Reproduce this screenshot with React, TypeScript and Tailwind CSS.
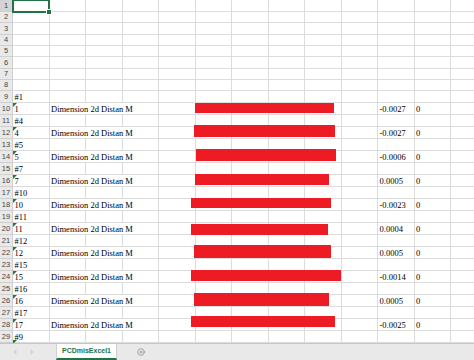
import { CirclePlus } from 'lucide-react';

const COLS = 13;

// column A text, keyed by row number
const colA: Record<number, string> = {
  9: '#1', 10: '1', 11: '#4', 12: '4', 13: '#5', 14: '5', 15: '#7', 16: '7',
  17: '#10', 18: '10', 19: '#11', 20: '11', 21: '#12', 22: '12', 23: '#15', 24: '15',
  25: '#16', 26: '16', 27: '#17', 28: '17', 29: '#9',
};

const deviation: Record<number, string> = {
  10: '-0.0027', 12: '-0.0027', 14: '-0.0006', 16: '0.0005', 18: '-0.0023',
  20: '0.0004', 22: '0.0005', 24: '-0.0014', 26: '0.0005', 28: '-0.0025',
};

// chart bars drawn over the grid: left, right, top, bottom
const bars = [
  [195, 334, 103, 113],
  [194, 335, 125, 137],
  [196, 336, 149, 161],
  [195, 329, 174, 185],
  [191, 331, 198, 208],
  [191, 328, 224, 235],
  [194, 331, 245, 258],
  [191, 341, 270, 281],
  [194, 329, 293, 306],
  [191, 335, 316, 327],
];

const rowHeight = (r: number) => (r === 1 ? 'h-[12px]' : r <= 8 ? 'h-[11.33px]' : 'h-[12px]');

const Triangle = ({ className = 'top-0' }: { className?: string }) => (
  <span
    className={`absolute left-0 h-0 w-0 border-t-[4px] border-r-[4px] border-t-[#1d7a3c] border-r-transparent ${className}`}
  />
);

const Row = ({ r }: { r: number }) => {
  const even = r >= 10 && r % 2 === 0;
  const cells: { key: number; wide?: boolean; text?: string }[] = [];
  for (let c = 0; c < COLS; c++) {
    if (even && c === 1) {
      // text overflows across B:D, so no gridlines inside
      cells.push({ key: c, wide: true, text: 'Dimension 2d Distan M' });
      c += 2;
      continue;
    }
    let text: string | undefined;
    if (c === 0) text = colA[r];
    if (c === 10) text = deviation[r];
    if (c === 11 && even) text = '0';
    cells.push({ key: c, text });
  }

  return (
    <div className={`flex shrink-0 ${rowHeight(r)}`}>
      <div
        className={`flex w-[13px] shrink-0 items-center justify-center border-r border-b border-[#cfcfcf] font-['Liberation_Sans',sans-serif] text-[7.5px] leading-none text-[#444] ${
          r === 1 ? 'bg-[#d4d4d4]' : 'bg-[#e9e9e9]'
        }`}
      >
        {r}
      </div>
      {cells.map((cell) => (
        <div
          key={cell.key}
          className={`relative flex shrink-0 items-center border-r border-b border-[#dcdcdc] pl-[1.5px] text-[8.5px] leading-none whitespace-nowrap text-black ${
            cell.wide ? 'w-[109.5px]' : 'w-[36.5px]'
          }`}
        >
          {cell.key === 0 && even && <Triangle />}
          {cell.text}
          {cell.key === 0 && r === 29 && <Triangle className="-bottom-[2px] z-20" />}
        </div>
      ))}
    </div>
  );
};

export default function App() {
  const rows = Array.from({ length: 29 }, (_, i) => i + 1);
  return (
    <div className="flex h-[360px] w-[474px] flex-col overflow-hidden bg-white font-['Liberation_Serif',serif]">
      {/* Grid */}
      <div className="relative h-[343.3px] shrink-0 overflow-hidden">
        {rows.map((r) => (
          <Row key={r} r={r} />
        ))}

        {/* Active cell A1 */}
        <div className="absolute left-[12px] top-[-1px] h-[13.5px] w-[38px] border-2 border-[#217346]">
          <span className="absolute -right-[3px] -bottom-[3px] h-[4px] w-[4px] bg-[#217346] outline outline-1 outline-white" />
        </div>

        {/* Bar chart overlay */}
        {bars.map(([l, rgt, t, b], i) => (
          <div
            key={i}
            className="absolute bg-[#ed1c24]"
            style={{ left: l, top: t, width: rgt - l, height: b - t }}
          />
        ))}
      </div>

      {/* Sheet tabs */}
      <div className="flex flex-1 items-stretch border-t border-[#c6c6c6] bg-[#e9e9e9] font-['Liberation_Sans',sans-serif]">
        <div className="flex w-[56px] shrink-0 items-center gap-[11px] pl-[13px] text-[#b4b4b4]">
          <svg width="5" height="6" viewBox="0 0 5 6">
            <path d="M3.5 1 L1.5 3 L3.5 5" fill="none" stroke="currentColor" strokeWidth="0.9" />
          </svg>
          <svg width="5" height="6" viewBox="0 0 5 6">
            <path d="M1.5 1 L3.5 3 L1.5 5" fill="none" stroke="currentColor" strokeWidth="0.9" />
          </svg>
        </div>
        <div className="flex w-[61px] shrink-0 items-center justify-center border-x border-[#d0d0d0] border-b-2 border-b-[#217346] bg-white text-[7px] font-bold text-[#217346]">
          PCDmisExcel1
        </div>
        <div className="flex items-center pl-[20px] text-[#6e6e6e]">
          <CirclePlus size={8} strokeWidth={1.6} />
        </div>
      </div>
    </div>
  );
}
